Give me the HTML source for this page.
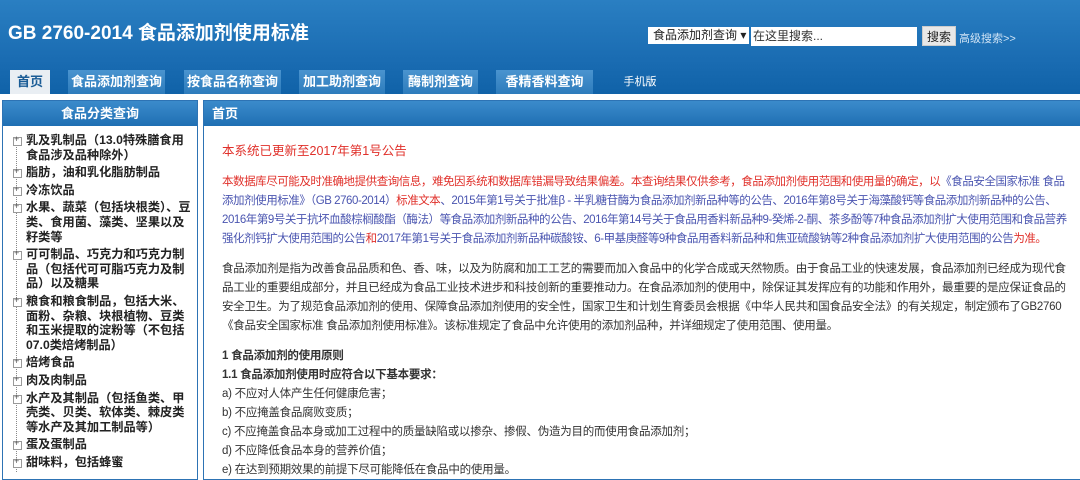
<!DOCTYPE html>
<html><head><meta charset="utf-8"><style>
*{margin:0;padding:0;box-sizing:border-box}
body{width:1080px;height:472px;overflow:hidden;background:#fff;font-family:"Liberation Sans","Noto Sans CJK SC",sans-serif;position:relative}
#hd{position:absolute;left:0;top:0;width:1080px;height:94px;background:linear-gradient(180deg,#2a7fc2 0%,#1b6db3 60%,#1062a8 100%)}
#title{position:absolute;left:8px;top:18px;color:#fff;font-size:19px;font-weight:bold}
#sel{position:absolute;left:648px;top:27px;width:101px;height:17px;background:#fff;font-size:12px;color:#222;padding-left:5px;line-height:17px}
#inp{position:absolute;left:751px;top:27px;width:166px;height:19px;background:#fff;font-size:12px;color:#333;padding-left:2px;line-height:19px}
#btn{position:absolute;left:922px;top:26px;width:34px;height:20px;background:#e8e8e8;font-size:12px;color:#222;text-align:center;line-height:20px;border:1px solid #ccc}
#adv{position:absolute;left:959px;top:30px;color:#cfe3f5;font-size:11px}
.tab{position:absolute;top:70px;height:24px;background:linear-gradient(180deg,#4a94cf,#2d7cbc);color:#fff;font-size:13px;font-weight:bold;text-align:center;line-height:24px}
.tab.on{background:#e9eef3;color:#1a5c96}
#lp{position:absolute;left:2px;top:100px;width:196px;height:380px;border:1px solid #2d73b4;background:#fff;overflow:hidden}
#mp{position:absolute;left:203px;top:100px;width:877px;height:380px;border:1px solid #2d73b4;border-right:none;background:#fff;overflow:hidden}
.bar{height:25px;background:linear-gradient(180deg,#3b8bcb,#1f6fb3);color:#fff;font-size:13px;font-weight:bold;line-height:25px}
#lp .bar{text-align:center}
#mp .bar{padding-left:8px}
.tree{padding:7px 0 0 10px;font-size:12.2px;font-weight:bold;color:#222;line-height:14.6px;position:relative}
.tree:before{content:"";position:absolute;left:13px;top:12px;bottom:0;border-left:1px dotted #888}
.it{position:relative;padding-left:13px;padding-bottom:3px;width:182px}
.it:before{content:"";position:absolute;left:0;top:4px;width:7px;height:7px;border:1px solid #999;background:#fff}
.it:after{content:"+";position:absolute;left:1px;top:-1px;font-size:9px;color:#555;font-weight:normal}
#ct{padding:16px 0 0 18px;font-size:11.5px;letter-spacing:-0.25px;color:#333;line-height:19px;width:866px}
.r{color:#e0302a}.b{color:#4a55b0}
</style></head><body>
<div id="hd">
<div id="title">GB 2760-2014 食品添加剂使用标准</div>
<div id="sel">食品添加剂查询 ▾</div>
<div id="inp">在这里搜索...</div>
<div id="btn">搜索</div>
<div id="adv">高级搜索&gt;&gt;</div>
<div class="tab on" style="left:10px;width:40px">首页</div>
<div class="tab" style="left:68px;width:97px">食品添加剂查询</div>
<div class="tab" style="left:184px;width:97px">按食品名称查询</div>
<div class="tab" style="left:299px;width:86px">加工助剂查询</div>
<div class="tab" style="left:403px;width:75px">酶制剂查询</div>
<div class="tab" style="left:496px;width:97px">香精香料查询</div>
<div class="tab" style="left:610px;width:60px;background:none;font-weight:normal;font-size:11px">手机版</div>
</div>
<div id="lp"><div class="bar">食品分类查询</div>
<div class="tree">
<div class="it">乳及乳制品（13.0特殊膳食用食品涉及品种除外）</div>
<div class="it">脂肪，油和乳化脂肪制品</div>
<div class="it">冷冻饮品</div>
<div class="it">水果、蔬菜（包括块根类）、豆类、食用菌、藻类、坚果以及籽类等</div>
<div class="it">可可制品、巧克力和巧克力制品（包括代可可脂巧克力及制品）以及糖果</div>
<div class="it">粮食和粮食制品，包括大米、面粉、杂粮、块根植物、豆类和玉米提取的淀粉等（不包括07.0类焙烤制品）</div>
<div class="it">焙烤食品</div>
<div class="it">肉及肉制品</div>
<div class="it">水产及其制品（包括鱼类、甲壳类、贝类、软体类、棘皮类等水产及其加工制品等）</div>
<div class="it">蛋及蛋制品</div>
<div class="it">甜味料，包括蜂蜜</div>
</div></div>
<div id="mp"><div class="bar">首页</div>
<div id="ct">
<p class="r" style="font-size:12.5px;letter-spacing:0">本系统已更新至2017年第1号公告</p>
<p style="margin-top:12px;letter-spacing:-0.45px"><span class="r">本数据库尽可能及时准确地提供查询信息，难免因系统和数据库错漏导致结果偏差。本查询结果仅供参考，食品添加剂使用范围和使用量的确定，以</span><span class="b">《食品安全国家标准 食品添加剂使用标准》（GB 2760-2014）</span><span class="r">标准文本</span><span class="b">、2015年第1号关于批准β - 半乳糖苷酶为食品添加剂新品种等的公告、2016年第8号关于海藻酸钙等食品添加剂新品种的公告、2016年第9号关于抗坏血酸棕榈酸酯（酶法）等食品添加剂新品种的公告、2016年第14号关于食品用香料新品种9-癸烯-2-酮、茶多酚等7种食品添加剂扩大使用范围和食品营养强化剂钙扩大使用范围的公告</span><span class="r">和</span><span class="b">2017年第1号关于食品添加剂新品种碳酸铵、6-甲基庚醛等9种食品用香料新品种和焦亚硫酸钠等2种食品添加剂扩大使用范围的公告</span><span class="r">为准。</span></p>
<p style="margin-top:11px">食品添加剂是指为改善食品品质和色、香、味，以及为防腐和加工工艺的需要而加入食品中的化学合成或天然物质。由于食品工业的快速发展，食品添加剂已经成为现代食品工业的重要组成部分，并且已经成为食品工业技术进步和科技创新的重要推动力。在食品添加剂的使用中，除保证其发挥应有的功能和作用外，最重要的是应保证食品的安全卫生。为了规范食品添加剂的使用、保障食品添加剂使用的安全性，国家卫生和计划生育委员会根据《中华人民共和国食品安全法》的有关规定，制定颁布了GB2760《食品安全国家标准 食品添加剂使用标准》。该标准规定了食品中允许使用的添加剂品种，并详细规定了使用范围、使用量。</p>
<p style="margin-top:11px;font-weight:bold">1 食品添加剂的使用原则</p>
<p style="font-weight:bold">1.1 食品添加剂使用时应符合以下基本要求：</p>
<p>a) 不应对人体产生任何健康危害；</p>
<p>b) 不应掩盖食品腐败变质；</p>
<p>c) 不应掩盖食品本身或加工过程中的质量缺陷或以掺杂、掺假、伪造为目的而使用食品添加剂；</p>
<p>d) 不应降低食品本身的营养价值；</p>
<p>e) 在达到预期效果的前提下尽可能降低在食品中的使用量。</p>
</div></div>
</body></html>
